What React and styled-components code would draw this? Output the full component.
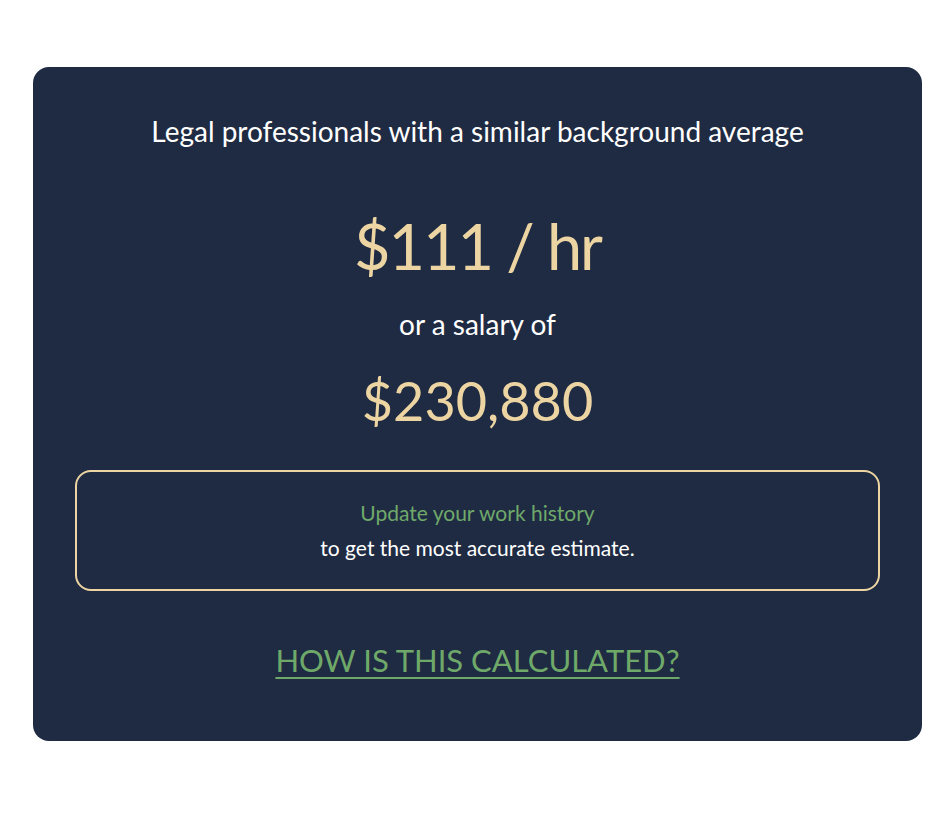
import styled, { createGlobalStyle } from "styled-components";

const GlobalStyle = createGlobalStyle`
    body {
        margin: 0;
        background: #ffffff;
        font-family: "Lato", "Open Sans", sans-serif;
    }
`;

const Page = styled.div`
    padding: 67px 30px 76px 33px;
`;

const Card = styled.section`
    background: #1f2b42;
    border-radius: 16px;
    padding: 40px 42px 0;
    display: flex;
    flex-direction: column;
    align-items: center;
    color: #ffffff;
    height: 674px;
    box-sizing: border-box;
`;

const Heading = styled.h2`
    margin: 0;
    font-size: 28px;
    font-weight: 400;
    line-height: 48px;
    text-align: center;
`;

const Amount = styled.div`
    color: #edd5a3;
    font-size: ${(props) => props.size}px;
    letter-spacing: ${(props) => props.spacing || 0}px;
    line-height: 1;
    margin-top: ${(props) => props.top}px;
`;

const Sub = styled.div`
    font-size: 28px;
    line-height: 40px;
    margin-top: 27px;
`;

const Notice = styled.div`
    align-self: stretch;
    margin-top: 42px;
    border: 2px solid #edd5a3;
    border-radius: 16px;
    height: 121px;
    box-sizing: border-box;
    display: flex;
    flex-direction: column;
    align-items: center;
    justify-content: center;
    gap: 5px;
`;

const NoticeLink = styled.a`
    color: #6fa96a;
    font-size: 21px;
    line-height: 30px;
    text-decoration: none;
    cursor: pointer;
`;

const NoticeText = styled.div`
    font-size: 21px;
    line-height: 30px;
`;

const CalcLink = styled.a`
    margin-top: 49px;
    color: #6fa96a;
    font-size: 31px;
    line-height: 40px;
    text-decoration: underline;
    text-decoration-thickness: 2px;
    text-underline-offset: 5px;
    cursor: pointer;
`;

const App = () => {
    return (
        <>
            <GlobalStyle />
            <Page>
                <Card>
                    <Heading>Legal professionals with a similar background average</Heading>
                    <Amount size={63} spacing={-2} top={59}>$111 / hr</Amount>
                    <Sub>or a salary of</Sub>
                    <Amount size={54} top={30}>$230,880</Amount>
                    <Notice>
                        <NoticeLink>Update your work history</NoticeLink>
                        <NoticeText>to get the most accurate estimate.</NoticeText>
                    </Notice>
                    <CalcLink>HOW IS THIS CALCULATED?</CalcLink>
                </Card>
            </Page>
        </>
    );
};

export default App;
